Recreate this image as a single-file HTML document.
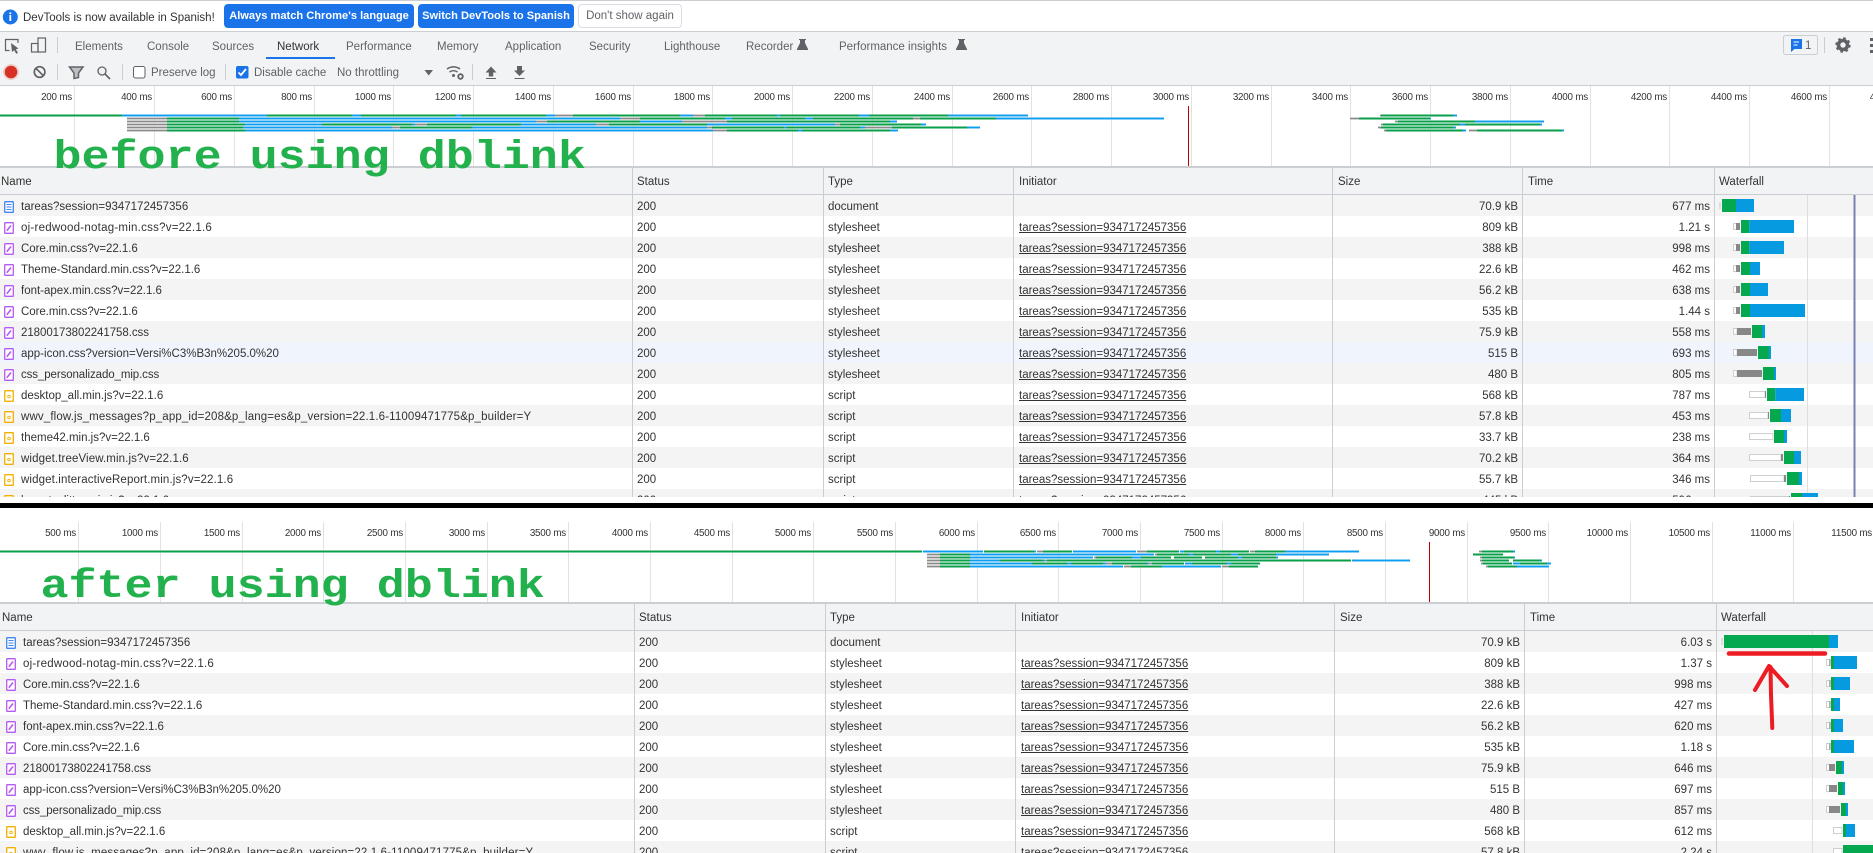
<!DOCTYPE html>
<html lang="en"><head><meta charset="utf-8"><title>DevTools Network</title>
<style>
html,body{margin:0;padding:0;width:1873px;height:853px;overflow:hidden;background:#fff}
body{position:relative;font-family:"Liberation Sans",sans-serif;font-size:11.5px;color:#333}
.a{position:absolute}
.btn{position:absolute;top:4px;height:24px;line-height:24px;text-align:center;border-radius:4px;background:#1a73e8;color:#fff;font-weight:bold;font-size:11.1px;box-sizing:border-box}
.tab{position:absolute;top:40px;line-height:14px;color:#5f6368;white-space:nowrap}
.tb{position:absolute;top:66px;line-height:14px;color:#5f6368;white-space:nowrap}
.sec{position:absolute;left:0;width:1873px;overflow:hidden}
.h{position:absolute;left:0;width:1873px;height:26px;background:#f1f3f4;border-bottom:1px solid #cacdd1;box-sizing:content-box}
.h span{position:absolute;top:7px;line-height:14px;color:#333}
.r{position:absolute;left:0;width:1873px;height:21px;background:#fff}
.r.g{background:#f4f4f4}
.r.o{background:#f0f4fc}
.r span{position:absolute;top:5px;line-height:14px;white-space:nowrap}
.r svg{position:absolute;top:5.5px;left:4px;width:10px;height:12px}
.v{position:absolute;width:1px;background:#cacdd1}
.t .n{left:21px}.t .s{left:637px}.t .y{left:828px}.t .i{left:1019px;text-decoration:underline}
.t .z{right:355px}.t .m{right:163px}
.u .n{left:23px}.u .s{left:639px}.u .y{left:830px}.u .i{left:1021px;text-decoration:underline}
.u .z{right:353px}.u .m{right:161px}
.u .r svg{left:6px}
.oj{letter-spacing:.24px}.ww{letter-spacing:.14px}.tv{letter-spacing:.11px}.ir{letter-spacing:.12px}.cp{letter-spacing:-.1px}.co{letter-spacing:-.06px}
</style></head>
<body>
<svg width="0" height="0" style="position:absolute">
<defs>
<symbol id="d" viewBox="0 0 10 12"><rect x=".7" y=".7" width="8.6" height="10.6" rx=".6" fill="#fff" stroke="#4285f4" stroke-width="1.3"/><path d="M2.5 3.5H7.5M2.5 6H7.5M2.5 8.5H7.5" stroke="#4285f4" stroke-width="1"/></symbol>
<symbol id="c" viewBox="0 0 10 12"><rect x=".7" y=".7" width="8.6" height="10.6" rx=".6" fill="#fff" stroke="#b45bf5" stroke-width="1.3"/><path d="M2.8 8.8L7 3.5" stroke="#b45bf5" stroke-width="1.6"/></symbol>
<symbol id="j" viewBox="0 0 10 12"><rect x=".7" y=".7" width="8.6" height="10.6" rx=".6" fill="#fff" stroke="#f3b000" stroke-width="1.3"/><circle cx="5" cy="6.5" r="1.3" fill="none" stroke="#f3b000" stroke-width=".9"/></symbol>
<path id="og" d="M0 115.5H122M267 115.5H352M361 115.5H456M461 115.5H546M573 115.5H680M705 115.5H777M780 115.5H859M869 115.5H948M1381 115.5H1453
M167 118.5H239M640 118.5H725M732 118.5H805M813 118.5H913M920 118.5H996M1359 118.5H1430
M167 121.5H239M547 121.5H640M727 121.5H890M1398 121.5H1475
M167 124.5H245M322 124.5H412M427 124.5H521M609 124.5H707M840 124.5H921M1383 124.5H1460M1465 124.5H1540
M167 127.5H243M400 127.5H472M712 127.5H784M786 127.5H860M892 127.5H967M1381 127.5H1454
M167 130.5H245M727 130.5H798M802 130.5H890M1386 130.5H1463M1477 130.5H1562
M0 551.5H922M984 551.5H1034M1043 551.5H1072M1147 551.5H1179M1184 551.5H1216M1220 551.5H1249M1255 551.5H1285M1482 551.5H1513
M940 554.5H970M1157 554.5H1189M1193 554.5H1231M1238 554.5H1276M1473 554.5H1503
M940 557.5H970M1096 557.5H1132M1141 557.5H1171M1174 557.5H1202M1205 557.5H1238M1242 557.5H1276M1482 557.5H1514
M940 560.5H970M1000 560.5H1043M1047 560.5H1351M1482 560.5H1509M1513 560.5H1541
M940 563.5H970M1032 563.5H1067M1071 563.5H1103M1112 563.5H1147M1152 563.5H1184M1192 563.5H1227M1231 563.5H1260M1483 563.5H1512M1520 563.5H1547
M940 566.5H970M1131 566.5H1162M1229 566.5H1258M1488 566.5H1517"/>
<path id="ob" d="M122 115.5H267M352 115.5H361M456 115.5H461M546 115.5H555M680 115.5H693M777 115.5H780M859 115.5H869M948 115.5H1028M1453 115.5H1457
M239 118.5H620M725 118.5H732M805 118.5H813M996 118.5H1164M1430 118.5H1431
M239 121.5H536M640 121.5H682M890 121.5H897M1475 121.5H1544
M245 124.5H322M412 124.5H415M521 124.5H596M707 124.5H835M921 124.5H926M1460 124.5H1465M1540 124.5H1542
M243 127.5H392M472 127.5H707M784 127.5H786M860 127.5H865M967 127.5H980M1454 127.5H1456
M245 130.5H713M798 130.5H802M890 130.5H898M1463 130.5H1466M1562 130.5H1564
M923 551.5H983M1034 551.5H1036M1073 551.5H1136M1180 551.5H1184M1216 551.5H1220M1285 551.5H1359M1513 551.5H1515
M970 554.5H1154M1189 554.5H1193M1231 554.5H1238M1276 554.5H1329
M970 557.5H1093M1132 557.5H1141M1238 557.5H1242M1276 557.5H1278M1514 557.5H1515
M970 560.5H1000M1043 560.5H1045M1352 560.5H1410M1541 560.5H1542
M970 563.5H1032M1067 563.5H1071M1103 563.5H1106M1147 563.5H1149M1185 563.5H1192M1227 563.5H1231M1513 563.5H1520M1547 563.5H1551
M970 566.5H1123M1162 566.5H1221M1517 566.5H1549"/>
<path id="os" d="M555 115.5H573M693 115.5H705M1380 115.5H1381
M127 118.5H167M620 118.5H640M913 118.5H920M1350 118.5H1359
M127 121.5H167M536 121.5H547M682 121.5H727M1395 121.5H1398
M127 124.5H167M415 124.5H427M596 124.5H609M835 124.5H840M1381 124.5H1383
M127 127.5H167M392 127.5H400M707 127.5H712M865 127.5H892M1378 127.5H1381
M127 130.5H167M713 130.5H727M1384 130.5H1386M1469 130.5H1477
M1037 551.5H1043M1137 551.5H1147M1250 551.5H1255M1479 551.5H1482
M927 554.5H940M1155 554.5H1157
M927 557.5H940M1094 557.5H1096M1480 557.5H1482
M927 560.5H940M1045 560.5H1047M1480 560.5H1482
M927 563.5H940M1106 563.5H1112M1149 563.5H1152M1481 563.5H1483
M927 566.5H940M1124 566.5H1131M1222 566.5H1229M1486 566.5H1488"/>
</defs>
</svg>

<!-- Info bar -->
<div class="a" style="left:0;top:0;width:1873px;height:1px;background:#cacdd1"></div>
<div class="a" style="left:23px;top:11px;line-height:14px;white-space:nowrap;color:#333">DevTools is now available in Spanish!</div>
<div class="btn" style="left:224px;width:190px">Always match Chrome's language</div>
<div class="btn" style="left:418px;width:156px">Switch DevTools to Spanish</div>
<div class="btn" style="left:578px;width:104px;background:#fff;color:#5f6368;font-weight:normal;font-size:11.5px;border:1px solid #dadce0;line-height:22px">Don't show again</div>

<!-- Tabs -->
<div class="a" style="left:0;top:31px;width:1873px;height:27px;background:#f1f3f4;border-top:1px solid #cacdd1;border-bottom:1px solid #cacdd1;box-sizing:content-box"></div>
<span class="tab" style="left:75px">Elements</span>
<span class="tab" style="left:147px">Console</span>
<span class="tab" style="left:212px">Sources</span>
<span class="tab" style="left:277px;color:#333">Network</span>
<span class="tab" style="left:346px">Performance</span>
<span class="tab" style="left:437px">Memory</span>
<span class="tab" style="left:505px">Application</span>
<span class="tab" style="left:589px">Security</span>
<span class="tab" style="left:664px">Lighthouse</span>
<span class="tab" style="left:746px">Recorder</span>
<span class="tab" style="left:839px">Performance insights</span>
<div class="a" style="left:266px;top:57px;width:69px;height:2px;background:#1a73e8"></div>

<!-- Toolbar -->
<div class="a" style="left:0;top:59px;width:1873px;height:26px;background:#f1f3f4;border-bottom:1px solid #cacdd1"></div>
<span class="tb" style="left:151px">Preserve log</span>
<span class="tb" style="left:254px">Disable cache</span>
<span class="tb" style="left:337px">No throttling</span>
<span class="a" style="left:1805px;top:39px;line-height:14px;color:#5f6368">1</span>

<!-- Top table -->
<div class="sec t" style="top:166px;height:331px">
<div class="a" style="left:0;top:0;width:1873px;height:2px;background:#cacdd1"></div>
<div class="h" style="top:2px"><span style="left:1px">Name</span><span style="left:637px">Status</span><span style="left:828px">Type</span><span style="left:1019px">Initiator</span><span style="left:1338px">Size</span><span style="left:1528px">Time</span><span style="left:1719px">Waterfall</span></div>
<div class="r g" style="top:29px"><svg><use href="#d"/></svg><span class="n">tareas?session=9347172457356</span><span class="s">200</span><span class="y">document</span><span class="z">70.9 kB</span><span class="m">677 ms</span></div>
<div class="r" style="top:50px"><svg><use href="#c"/></svg><span class="n oj">oj-redwood-notag-min.css?v=22.1.6</span><span class="s">200</span><span class="y">stylesheet</span><span class="i">tareas?session=9347172457356</span><span class="z">809 kB</span><span class="m">1.21 s</span></div>
<div class="r g" style="top:71px"><svg><use href="#c"/></svg><span class="n co">Core.min.css?v=22.1.6</span><span class="s">200</span><span class="y">stylesheet</span><span class="i">tareas?session=9347172457356</span><span class="z">388 kB</span><span class="m">998 ms</span></div>
<div class="r" style="top:92px"><svg><use href="#c"/></svg><span class="n">Theme-Standard.min.css?v=22.1.6</span><span class="s">200</span><span class="y">stylesheet</span><span class="i">tareas?session=9347172457356</span><span class="z">22.6 kB</span><span class="m">462 ms</span></div>
<div class="r g" style="top:113px"><svg><use href="#c"/></svg><span class="n">font-apex.min.css?v=22.1.6</span><span class="s">200</span><span class="y">stylesheet</span><span class="i">tareas?session=9347172457356</span><span class="z">56.2 kB</span><span class="m">638 ms</span></div>
<div class="r" style="top:134px"><svg><use href="#c"/></svg><span class="n co">Core.min.css?v=22.1.6</span><span class="s">200</span><span class="y">stylesheet</span><span class="i">tareas?session=9347172457356</span><span class="z">535 kB</span><span class="m">1.44 s</span></div>
<div class="r g" style="top:155px"><svg><use href="#c"/></svg><span class="n co">21800173802241758.css</span><span class="s">200</span><span class="y">stylesheet</span><span class="i">tareas?session=9347172457356</span><span class="z">75.9 kB</span><span class="m">558 ms</span></div>
<div class="r o" style="top:176px"><svg><use href="#c"/></svg><span class="n">app-icon.css?version=Versi%C3%B3n%205.0%20</span><span class="s">200</span><span class="y">stylesheet</span><span class="i">tareas?session=9347172457356</span><span class="z">515 B</span><span class="m">693 ms</span></div>
<div class="r g" style="top:197px"><svg><use href="#c"/></svg><span class="n cp">css_personalizado_mip.css</span><span class="s">200</span><span class="y">stylesheet</span><span class="i">tareas?session=9347172457356</span><span class="z">480 B</span><span class="m">805 ms</span></div>
<div class="r" style="top:218px"><svg><use href="#j"/></svg><span class="n">desktop_all.min.js?v=22.1.6</span><span class="s">200</span><span class="y">script</span><span class="i">tareas?session=9347172457356</span><span class="z">568 kB</span><span class="m">787 ms</span></div>
<div class="r g" style="top:239px"><svg><use href="#j"/></svg><span class="n ww">wwv_flow.js_messages?p_app_id=208&amp;p_lang=es&amp;p_version=22.1.6-11009471775&amp;p_builder=Y</span><span class="s">200</span><span class="y">script</span><span class="i">tareas?session=9347172457356</span><span class="z">57.8 kB</span><span class="m">453 ms</span></div>
<div class="r" style="top:260px"><svg><use href="#j"/></svg><span class="n">theme42.min.js?v=22.1.6</span><span class="s">200</span><span class="y">script</span><span class="i">tareas?session=9347172457356</span><span class="z">33.7 kB</span><span class="m">238 ms</span></div>
<div class="r g" style="top:281px"><svg><use href="#j"/></svg><span class="n tv">widget.treeView.min.js?v=22.1.6</span><span class="s">200</span><span class="y">script</span><span class="i">tareas?session=9347172457356</span><span class="z">70.2 kB</span><span class="m">364 ms</span></div>
<div class="r" style="top:302px"><svg><use href="#j"/></svg><span class="n ir">widget.interactiveReport.min.js?v=22.1.6</span><span class="s">200</span><span class="y">script</span><span class="i">tareas?session=9347172457356</span><span class="z">55.7 kB</span><span class="m">346 ms</span></div>
<div class="r g" style="top:323px"><svg><use href="#j"/></svg><span class="n">layoutsplitter.min.js?v=22.1.6</span><span class="s">200</span><span class="y">script</span><span class="i">tareas?session=9347172457356</span><span class="z">445 kB</span><span class="m">596 ms</span></div>
<div class="v" style="left:632px;top:2px;height:329px"></div><div class="v" style="left:823px;top:2px;height:329px"></div><div class="v" style="left:1013px;top:2px;height:329px"></div><div class="v" style="left:1332px;top:2px;height:329px"></div><div class="v" style="left:1522px;top:2px;height:329px"></div><div class="v" style="left:1714px;top:2px;height:329px"></div>
</div>

<!-- Bottom table -->
<div class="sec u" style="top:602px;height:251px">
<div class="a" style="left:0;top:0;width:1873px;height:2px;background:#cacdd1"></div>
<div class="h" style="top:2px"><span style="left:2px">Name</span><span style="left:639px">Status</span><span style="left:830px">Type</span><span style="left:1021px">Initiator</span><span style="left:1340px">Size</span><span style="left:1530px">Time</span><span style="left:1721px">Waterfall</span></div>
<div class="r g" style="top:29px"><svg><use href="#d"/></svg><span class="n">tareas?session=9347172457356</span><span class="s">200</span><span class="y">document</span><span class="z">70.9 kB</span><span class="m">6.03 s</span></div>
<div class="r" style="top:50px"><svg><use href="#c"/></svg><span class="n oj">oj-redwood-notag-min.css?v=22.1.6</span><span class="s">200</span><span class="y">stylesheet</span><span class="i">tareas?session=9347172457356</span><span class="z">809 kB</span><span class="m">1.37 s</span></div>
<div class="r g" style="top:71px"><svg><use href="#c"/></svg><span class="n co">Core.min.css?v=22.1.6</span><span class="s">200</span><span class="y">stylesheet</span><span class="i">tareas?session=9347172457356</span><span class="z">388 kB</span><span class="m">998 ms</span></div>
<div class="r" style="top:92px"><svg><use href="#c"/></svg><span class="n">Theme-Standard.min.css?v=22.1.6</span><span class="s">200</span><span class="y">stylesheet</span><span class="i">tareas?session=9347172457356</span><span class="z">22.6 kB</span><span class="m">427 ms</span></div>
<div class="r g" style="top:113px"><svg><use href="#c"/></svg><span class="n">font-apex.min.css?v=22.1.6</span><span class="s">200</span><span class="y">stylesheet</span><span class="i">tareas?session=9347172457356</span><span class="z">56.2 kB</span><span class="m">620 ms</span></div>
<div class="r" style="top:134px"><svg><use href="#c"/></svg><span class="n co">Core.min.css?v=22.1.6</span><span class="s">200</span><span class="y">stylesheet</span><span class="i">tareas?session=9347172457356</span><span class="z">535 kB</span><span class="m">1.18 s</span></div>
<div class="r g" style="top:155px"><svg><use href="#c"/></svg><span class="n co">21800173802241758.css</span><span class="s">200</span><span class="y">stylesheet</span><span class="i">tareas?session=9347172457356</span><span class="z">75.9 kB</span><span class="m">646 ms</span></div>
<div class="r" style="top:176px"><svg><use href="#c"/></svg><span class="n">app-icon.css?version=Versi%C3%B3n%205.0%20</span><span class="s">200</span><span class="y">stylesheet</span><span class="i">tareas?session=9347172457356</span><span class="z">515 B</span><span class="m">697 ms</span></div>
<div class="r g" style="top:197px"><svg><use href="#c"/></svg><span class="n cp">css_personalizado_mip.css</span><span class="s">200</span><span class="y">stylesheet</span><span class="i">tareas?session=9347172457356</span><span class="z">480 B</span><span class="m">857 ms</span></div>
<div class="r" style="top:218px"><svg><use href="#j"/></svg><span class="n">desktop_all.min.js?v=22.1.6</span><span class="s">200</span><span class="y">script</span><span class="i">tareas?session=9347172457356</span><span class="z">568 kB</span><span class="m">612 ms</span></div>
<div class="r g" style="top:239px"><svg><use href="#j"/></svg><span class="n ww">wwv_flow.js_messages?p_app_id=208&amp;p_lang=es&amp;p_version=22.1.6-11009471775&amp;p_builder=Y</span><span class="s">200</span><span class="y">script</span><span class="i">tareas?session=9347172457356</span><span class="z">57.8 kB</span><span class="m">2.24 s</span></div>
<div class="v" style="left:634px;top:2px;height:249px"></div><div class="v" style="left:825px;top:2px;height:249px"></div><div class="v" style="left:1015px;top:2px;height:249px"></div><div class="v" style="left:1334px;top:2px;height:249px"></div><div class="v" style="left:1524px;top:2px;height:249px"></div><div class="v" style="left:1716px;top:2px;height:249px"></div>
</div>

<!-- Graphics overlay -->
<svg class="a" style="left:0;top:0;z-index:2" width="1873" height="853" viewBox="0 0 1873 853" font-family="Liberation Sans, sans-serif">
<!-- header icons -->
<g fill="none" stroke="#5f6368" stroke-width="1.2">
<path d="M9.5 50.5H5.5V39.5H18V43"/>
<rect x="38" y="38" width="7.5" height="14"/>
<rect x="31.5" y="43.5" width="6.5" height="8.5"/>
<circle cx="39.6" cy="72" r="5.3" stroke-width="1.7"/>
<path d="M35.8 68.2L43.4 75.8" stroke-width="1.7"/>
<path d="M69.5 67H83L78.5 73V77.5L74 78.5V73Z" fill="#5f6368" fill-opacity=".35" stroke-width="1.5"/>
<circle cx="102" cy="71" r="4" stroke-width="1.3"/>
<path d="M105 74L110 79" stroke-width="1.6"/>
<path d="M447 69a11 11 0 0 1 13-0M449.5 72a7 7 0 0 1 8 0" stroke-width="1.5"/>
</g>
<path d="M11 43L18.5 48.5L15.8 49.4L18 52.8L16.2 53.8L14.2 50.3L12 52Z" fill="#5f6368"/>
<rect x="57" y="37" width="1" height="16" fill="#cacdd1"/>
<rect x="57" y="64" width="1" height="16" fill="#cacdd1"/><rect x="122" y="64" width="1" height="16" fill="#cacdd1"/><rect x="225" y="64" width="1" height="16" fill="#cacdd1"/><rect x="472" y="64" width="1" height="16" fill="#cacdd1"/>
<circle cx="11" cy="72" r="8" fill="#d93025" opacity=".18"/><circle cx="11" cy="72" r="6.3" fill="#d93025"/>
<rect x="133.5" y="66.5" width="11.5" height="11.5" rx="2" fill="#fff" stroke="#5f6368"/>
<rect x="236" y="66" width="12.5" height="12.5" rx="2" fill="#1a73e8"/>
<path d="M238.5 72.5L241 75L246 69" fill="none" stroke="#fff" stroke-width="1.8"/>
<path d="M424.5 70H433L428.7 75.5Z" fill="#5f6368"/>
<circle cx="453.5" cy="75.5" r="1.5" fill="#5f6368"/><circle cx="460.5" cy="76.5" r="2.3" fill="none" stroke="#5f6368" stroke-width="1.8"/>
<path d="M491 66.5L485.5 72.5H488.8V76.5H493.2V72.5H496.5ZM486 78H496V79H486Z" fill="#5f6368"/>
<path d="M517 66V70.5H514L519.5 76L525 70.5H522V66ZM514.5 78H524.5V79H514.5Z" fill="#5f6368"/>
<path d="M799 39H806V40H805V43L808 49V50H797V49L800 43V40H799Z" fill="#5f6368"/>
<path d="M958 39H965V40H964V43L967 49V50H956V49L959 43V40H958Z" fill="#5f6368"/>
<rect x="1783.5" y="35.5" width="34" height="19" rx="2" fill="none" stroke="#cacdd1"/>
<path d="M1791 39H1802V49H1794.5L1791 52Z" fill="#1a73e8"/><path d="M1793.5 42H1799M1793.5 45H1797.5" stroke="#fff" stroke-width="1"/>
<rect x="1824" y="37" width="1" height="16" fill="#cacdd1"/>
<circle cx="1843" cy="45" r="4.5" fill="none" stroke="#5f6368" stroke-width="3.6"/><circle cx="1843" cy="45" r="6.7" fill="none" stroke="#5f6368" stroke-width="2" stroke-dasharray="2.6 2.66"/>
<path d="M1870 38h3v3h-3zM1870 44h3v3h-3zM1870 50h3v3h-3z" fill="#5f6368"/>
<circle cx="10.3" cy="17" r="7.5" fill="#1a73e8"/><circle cx="10.3" cy="13.2" r="1" fill="#fff"/><rect x="9.4" y="15" width="1.8" height="6" fill="#fff"/>

<!-- timeline grids -->
<path stroke="#e2e2e2" fill="none" d="M74.5 86V166M154.5 86V166M234.5 86V166M314.5 86V166M393.5 86V166M473.5 86V166M553.5 86V166M633.5 86V166M712.5 86V166M792.5 86V166M872.5 86V166M952.5 86V166M1031.5 86V166M1111.5 86V166M1191.5 86V166M1271.5 86V166M1350.5 86V166M1430.5 86V166M1510.5 86V166M1590.5 86V166M1669.5 86V166M1749.5 86V166M1829.5 86V166"/>
<path stroke="#e2e2e2" fill="none" d="M78.5 522V602M160.5 522V602M242.5 522V602M323.5 522V602M405.5 522V602M487.5 522V602M568.5 522V602M650.5 522V602M732.5 522V602M813.5 522V602M895.5 522V602M977.5 522V602M1058.5 522V602M1140.5 522V602M1222.5 522V602M1303.5 522V602M1385.5 522V602M1467.5 522V602M1548.5 522V602M1630.5 522V602M1712.5 522V602M1793.5 522V602"/>
<g font-size="9.8" fill="#333" text-anchor="end" letter-spacing="-.2">
<text x="72" y="100">200 ms</text><text x="152" y="100">400 ms</text><text x="232" y="100">600 ms</text><text x="312" y="100">800 ms</text><text x="391" y="100">1000 ms</text><text x="471" y="100">1200 ms</text><text x="551" y="100">1400 ms</text><text x="631" y="100">1600 ms</text><text x="710" y="100">1800 ms</text><text x="790" y="100">2000 ms</text><text x="870" y="100">2200 ms</text><text x="950" y="100">2400 ms</text><text x="1029" y="100">2600 ms</text><text x="1109" y="100">2800 ms</text><text x="1189" y="100">3000 ms</text><text x="1269" y="100">3200 ms</text><text x="1348" y="100">3400 ms</text><text x="1428" y="100">3600 ms</text><text x="1508" y="100">3800 ms</text><text x="1588" y="100">4000 ms</text><text x="1667" y="100">4200 ms</text><text x="1747" y="100">4400 ms</text><text x="1827" y="100">4600 ms</text><text x="1906" y="100">4800 ms</text>
<text x="76" y="536">500 ms</text><text x="158" y="536">1000 ms</text><text x="240" y="536">1500 ms</text><text x="321" y="536">2000 ms</text><text x="403" y="536">2500 ms</text><text x="485" y="536">3000 ms</text><text x="566" y="536">3500 ms</text><text x="648" y="536">4000 ms</text><text x="730" y="536">4500 ms</text><text x="811" y="536">5000 ms</text><text x="893" y="536">5500 ms</text><text x="975" y="536">6000 ms</text><text x="1056" y="536">6500 ms</text><text x="1138" y="536">7000 ms</text><text x="1220" y="536">7500 ms</text><text x="1301" y="536">8000 ms</text><text x="1383" y="536">8500 ms</text><text x="1465" y="536">9000 ms</text><text x="1546" y="536">9500 ms</text><text x="1628" y="536">10000 ms</text><text x="1710" y="536">10500 ms</text><text x="1791" y="536">11000 ms</text><text x="1872" y="536">11500 ms</text>
</g>

<!-- overview bars -->
<g fill="none" stroke-width="2.5">
<use href="#og" stroke="#6cc796"/>
<use href="#ob" stroke="#7cc8f4"/>
<use href="#os" stroke="#cfcfcf"/>
</g>
<g fill="none" stroke-width="1.2">
<use href="#og" stroke="#0a9e48"/>
<use href="#ob" stroke="#0a9ff0"/>
<use href="#os" stroke="#8a8a8a"/>
</g>
<rect x="1188" y="106" width="1" height="60" fill="#c00000"/>
<rect x="1429" y="542" width="1" height="60" fill="#c00000"/>

<!-- waterfall columns -->
<rect x="1807" y="195" width="1" height="302" fill="#dedede"/>
<rect x="1853.5" y="195" width="2" height="302" fill="#7a80b2"/>
<rect x="1812" y="631" width="1" height="222" fill="#dedede"/>

<!-- Waterfall boxes -->
<g fill="#fff" stroke="#cfcfcf">
<rect x="1733.5" y="223.5" width="3" height="6"/><rect x="1733.5" y="244.5" width="3" height="6"/><rect x="1733.5" y="265.5" width="3" height="6"/><rect x="1733.5" y="286.5" width="3" height="6"/><rect x="1733.5" y="307.5" width="3" height="6"/>
<rect x="1733.5" y="328.5" width="3.5" height="6"/><rect x="1733.5" y="349.5" width="3.5" height="6"/><rect x="1733.5" y="370.5" width="3.5" height="6"/>
<rect x="1749.5" y="391.5" width="15.5" height="6"/><rect x="1749.5" y="412.5" width="18.5" height="6"/><rect x="1749.5" y="433.5" width="23.5" height="6"/><rect x="1749.5" y="454.5" width="31.5" height="6"/><rect x="1750.5" y="475.5" width="33.5" height="6"/><rect x="1750.5" y="496.5" width="39" height="6"/>
<rect x="1826.5" y="659.5" width="3" height="6"/><rect x="1826.5" y="680.5" width="3" height="6"/><rect x="1826.5" y="701.5" width="3" height="6"/><rect x="1826.5" y="722.5" width="3" height="6"/><rect x="1826.5" y="743.5" width="3" height="6"/><rect x="1826.5" y="764.5" width="3" height="6"/><rect x="1826.5" y="785.5" width="3" height="6"/><rect x="1826.5" y="806.5" width="3" height="6"/>
<rect x="1833.5" y="827.5" width="8.5" height="6"/><rect x="1833.5" y="848.5" width="8.5" height="6"/>
</g>
<g fill="none" stroke-width="7" stroke="#888">
<path d="M1736 226.5H1740M1736 247.5H1740M1736 268.5H1740M1736 289.5H1740M1736 310.5H1740M1737 331.5H1751M1737 352.5H1757M1737 373.5H1762M1765 394.5H1766M1768 415.5H1769M1781 457.5H1783M1784 478.5H1786M1789 499.5H1790M1829.5 662.5H1830.5M1829.5 683.5H1830.5M1829.5 704.5H1830.5M1829.5 725.5H1830.5M1829.5 746.5H1830.5M1829 767.5H1835M1829 788.5H1837M1829 809.5H1840"/>
</g>
<rect x="1719" y="202" width="2" height="7" fill="#ddd"/><rect x="1721" y="638" width="2" height="7" fill="#ddd"/>
<g fill="none" stroke-width="13">
<path stroke="#05a84e" d="M1722 205.5H1736M1741 226.5H1749.3M1741 247.5H1749.3M1741 268.5H1750M1741 289.5H1750M1741 310.5H1750M1752 331.5H1762M1758 352.5H1769M1763 373.5H1774M1767 394.5H1775.3M1770 415.5H1781M1774 436.5H1784M1784 457.5H1794M1787 478.5H1799M1791 499.5H1802
M1724 641.5H1829M1831 662.5H1834M1831 683.5H1834M1831 704.5H1834M1831 725.5H1834M1831 746.5H1834M1836 767.5H1842M1838 788.5H1843M1841 809.5H1846M1843 830.5H1846M1843 851.5H1873"/>
<path stroke="#069be0" d="M1736 205.5H1754M1749.3 226.5H1794M1749.3 247.5H1784M1750 268.5H1760M1750 289.5H1768M1750 310.5H1805M1762 331.5H1765M1769 352.5H1771M1774 373.5H1776M1775.3 394.5H1804M1781 415.5H1791M1784 436.5H1787M1794 457.5H1801M1799 478.5H1802M1802 499.5H1818
M1829 641.5H1838M1834 662.5H1857M1834 683.5H1850M1834 704.5H1840M1834 725.5H1843M1834 746.5H1854M1842 767.5H1844M1843 788.5H1845M1846 809.5H1848M1846 830.5H1855"/>
</g>

<!-- red annotation -->
<g fill="none" stroke="#ed1c24" stroke-width="4" stroke-linecap="round" stroke-linejoin="round">
<path d="M1729 653.5H1825" stroke-width="4.5"/>
<path d="M1770.5 667L1771 695L1772.3 728"/>
<path d="M1755 690L1769 666L1787 686"/>
</g>
</svg>

<!-- Separator bar between screenshots -->
<div class="a" style="left:0;top:497px;width:1873px;height:11px;background:#fff;z-index:3"></div>
<div class="a" style="left:0;top:503px;width:1873px;height:5px;background:#000;z-index:3"></div>

<!-- Big annotations -->
<svg class="a" style="left:0;top:0;z-index:5" width="1873" height="853" viewBox="0 0 1873 853">
<g font-family="Liberation Mono, monospace" font-weight="bold" font-size="46.7" fill="#22b14c">
<text transform="translate(53.5 168) scale(1 .85)">before using dblink</text>
<text transform="translate(40.5 597) scale(1 .85)">after using dblink</text>
</g>
</svg>
</body></html>
